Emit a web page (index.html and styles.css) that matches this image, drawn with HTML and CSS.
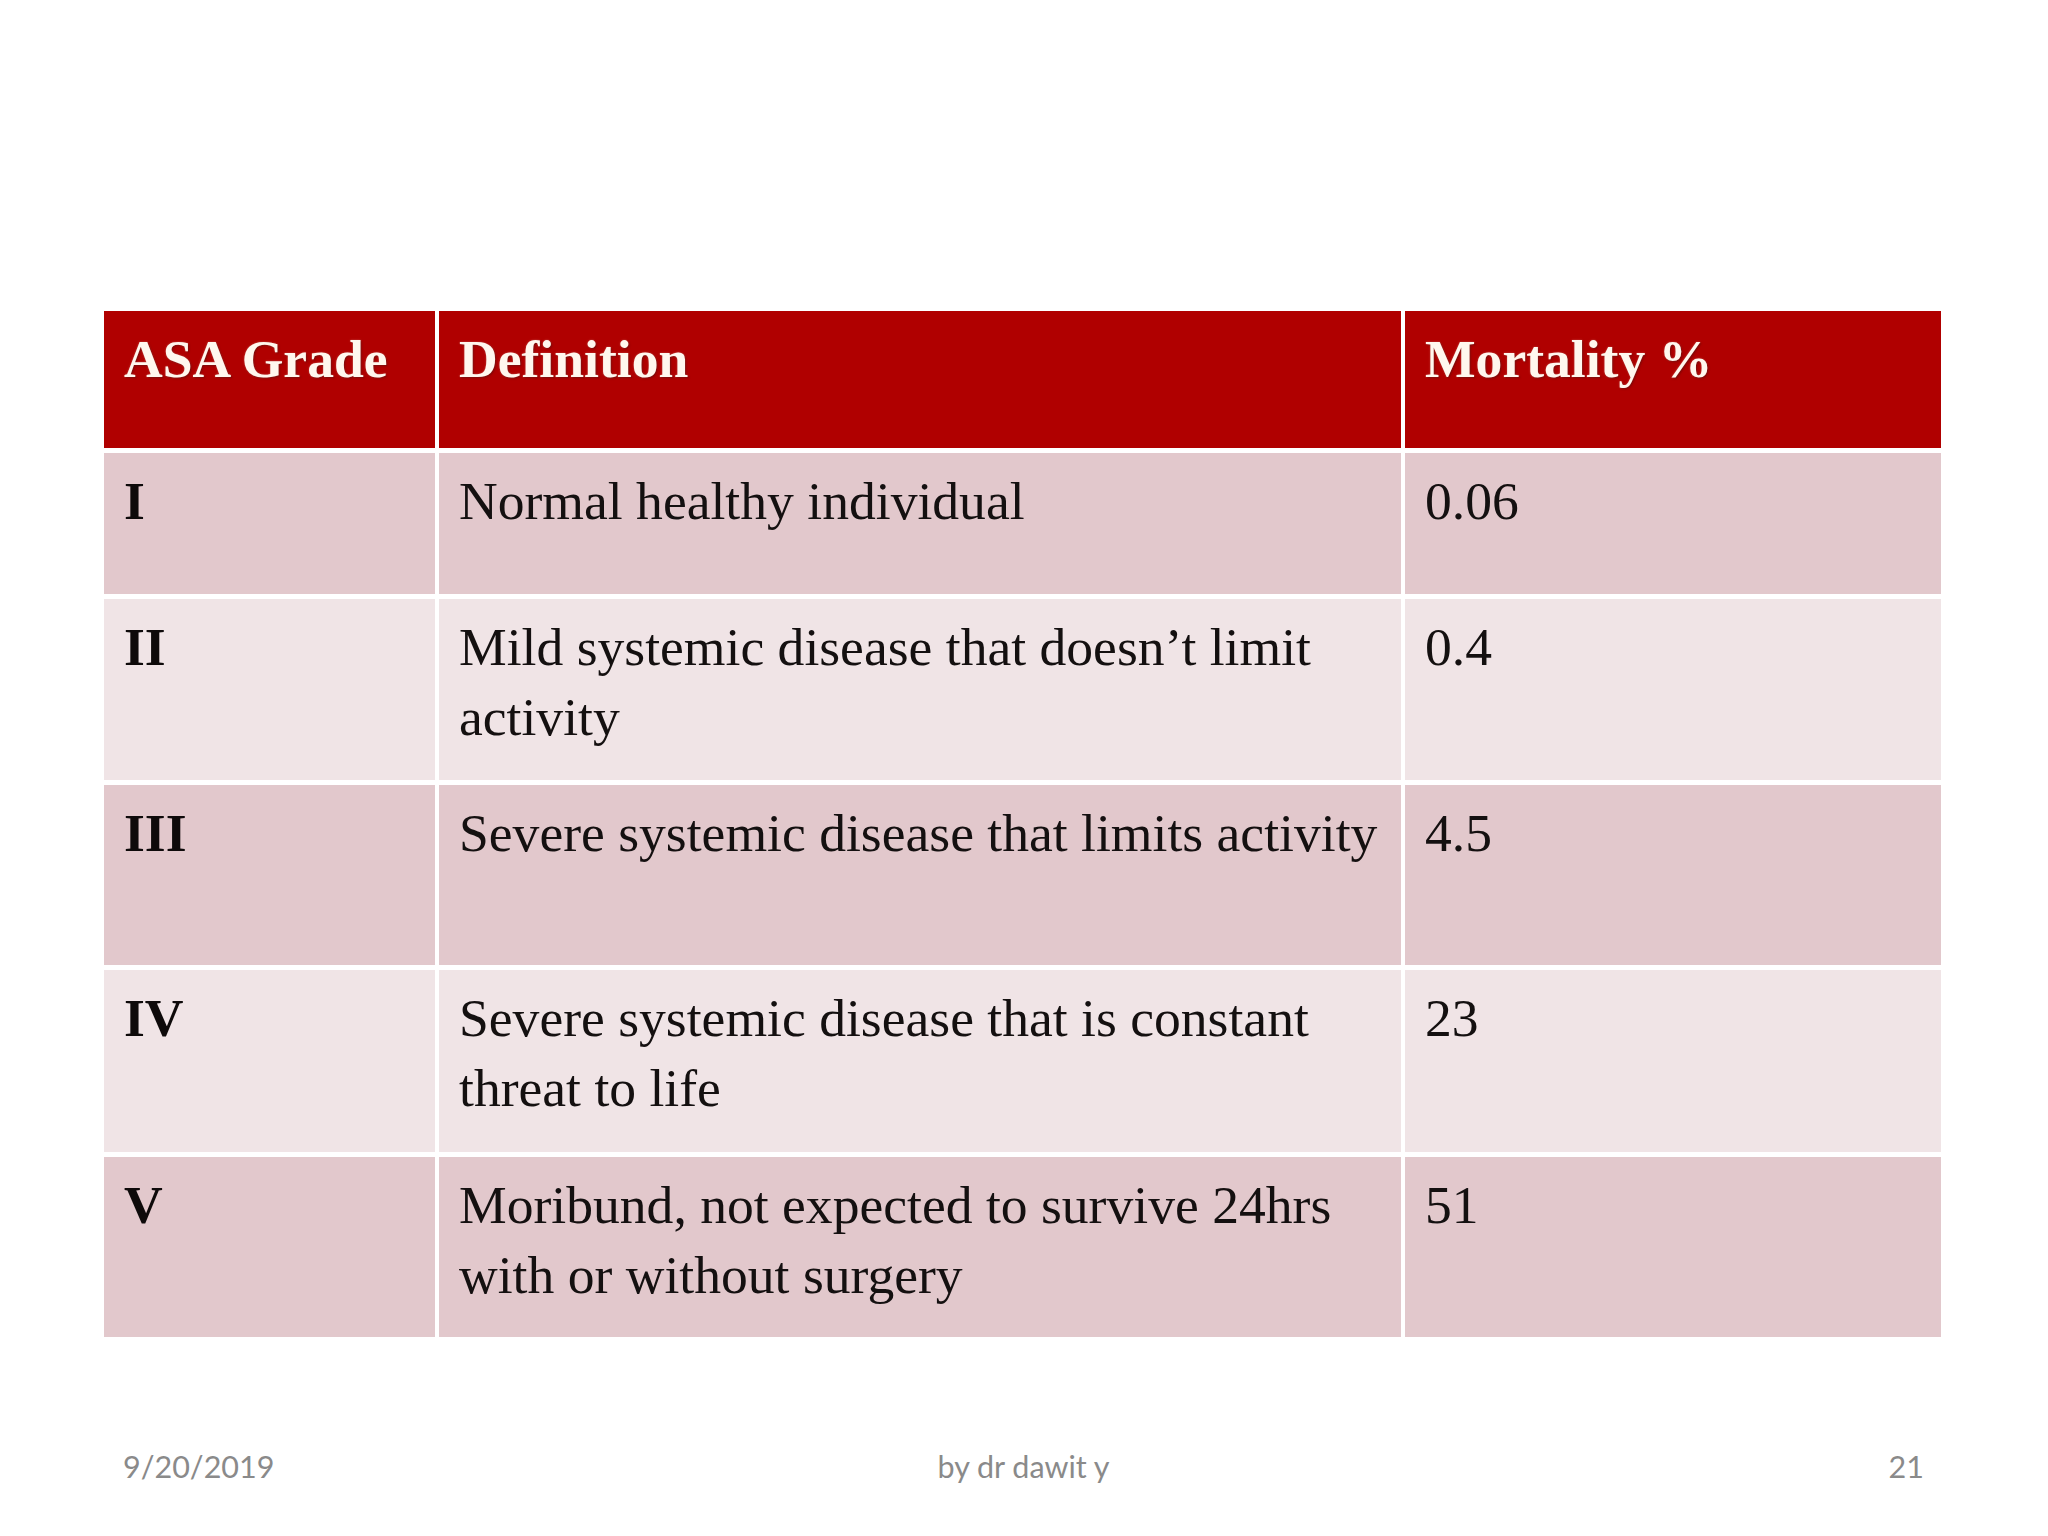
FILE: index.html
```html
<!DOCTYPE html>
<html lang="en">
<head>
<meta charset="utf-8">
<title>ASA Grade</title>
<link rel="stylesheet" href="styles.css">
</head>
<body>
<div class="slide">
  <div class="asa-table">
    <div class="cell head">ASA Grade</div>
    <div class="cell head">Definition</div>
    <div class="cell head">Mortality %</div>

    <div class="cell odd grade">I</div>
    <div class="cell odd">Normal healthy individual</div>
    <div class="cell odd">0.06</div>

    <div class="cell even grade">II</div>
    <div class="cell even">Mild systemic disease that doesn’t limit activity</div>
    <div class="cell even">0.4</div>

    <div class="cell odd grade">III</div>
    <div class="cell odd">Severe systemic disease that limits activity</div>
    <div class="cell odd">4.5</div>

    <div class="cell even grade">IV</div>
    <div class="cell even">Severe systemic disease that is constant threat to life</div>
    <div class="cell even">23</div>

    <div class="cell odd grade">V</div>
    <div class="cell odd">Moribund, not expected to survive 24hrs with or without surgery</div>
    <div class="cell odd">51</div>
  </div>

  <div class="footer">
    <div class="f-left">9/20/2019</div>
    <div class="f-mid">by dr dawit y</div>
    <div class="f-right">21</div>
  </div>
</div>
</body>
</html>
```

FILE: styles.css
```css
html, body {
  margin: 0;
  padding: 0;
  background: #ffffff;
}

.slide {
  width: 2048px;
  height: 1536px;
  box-sizing: border-box;
  padding-top: 311px;
  background: #ffffff;
  overflow: hidden;
}

.asa-table {
  margin-left: 104px;
  display: grid;
  grid-template-columns: 331px 962px 536px;
  grid-template-rows: 137px 141px 181px 180px 182px 180px;
  column-gap: 4px;
  row-gap: 5px;
  font-family: "Liberation Serif", "Times New Roman", serif;
  font-size: 53.6px;
  line-height: 70px;
  color: #141010;
}

.cell {
  box-sizing: border-box;
  padding: 13px 12px 0 20px;
}

.head {
  background: #b00000;
  color: #fff7ee;
  font-weight: bold;
  text-shadow: 1px 1px 2px rgba(90, 0, 0, 0.7), 0 0 2px rgba(255, 180, 170, 0.5);
}

.odd {
  background: #e2c8cc;
}

.even {
  background: #f0e4e6;
}

.grade {
  font-weight: bold;
  color: #0e0a0a;
}

.footer {
  margin-top: 109px;
  padding: 0 124px 0 123px;
  display: grid;
  grid-template-columns: 1fr auto 1fr;
  font-family: Lato, "Open Sans", sans-serif;
  font-size: 30.5px;
  line-height: 40px;
  color: #8a8a8a;
}

.f-left {
  text-align: left;
}

.f-mid {
  text-align: center;
}

.f-right {
  text-align: right;
}
```
